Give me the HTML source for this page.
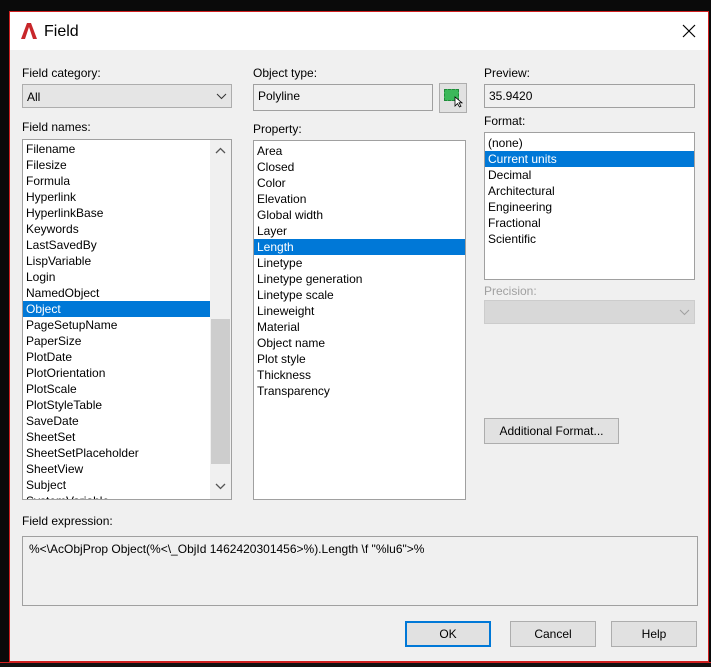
<!DOCTYPE html>
<html><head><meta charset="utf-8"><style>
*{box-sizing:border-box;margin:0;padding:0}
body{width:711px;height:667px;background:#0a0a0a;position:relative;overflow:hidden;font-family:"Liberation Sans",sans-serif;font-size:12px;color:#000}
.a{position:absolute}
.dlg{left:9px;top:11px;width:700px;height:651px;background:#f0f0f0;border:1px solid #d02020}
.title{left:9px;top:11px;width:700px;height:39px;background:#fff;border:1px solid #d02020;border-bottom:none}
.lbl{position:absolute;font-size:12px}
.box{position:absolute;border:1px solid #a0a0a0;background:#fff}
.item{height:16px;line-height:16px;padding-left:3px;white-space:nowrap}
.sel{background:#0078d7;color:#fff}
.btn{position:absolute;border:1px solid #adadad;background:#e1e1e1;text-align:center;line-height:24px}
</style></head><body>
<div class="a" style="left:0;top:662px;width:711px;height:5px;background:#111;border-top:1px solid #d02020"></div>
<div class="a dlg"></div>
<div class="a title"></div>
<svg class="a" style="left:20px;top:22px" width="18" height="18" viewBox="0 0 18 18"><path d="M1 17L7 1h4l6 16h-4L9 5 5 17z" fill="#c8262a"/></svg>
<div class="lbl" style="left:44px;top:23px;font-size:16px">Field</div>
<svg class="a" style="left:682px;top:24px" width="14" height="14"><path d="M1 1L13 13M13 1L1 13" stroke="#000" stroke-width="1.2"/></svg>

<div class="lbl" style="left:22px;top:66px">Field category:</div>
<div class="a" style="left:22px;top:84px;width:210px;height:24px;border:1px solid #adadad;background:#e5e5e5"><span style="position:absolute;left:4px;top:5px">All</span>
<svg style="position:absolute;right:4px;top:8px" width="11" height="7"><path d="M1 1l4.5 4.5L10 1" stroke="#333" fill="none"/></svg></div>

<div class="lbl" style="left:22px;top:120px">Field names:</div>
<div class="box" style="left:22px;top:139px;width:210px;height:361px;overflow:hidden">
<div style="padding-top:1px;width:187px">
<div class="item">Filename</div><div class="item">Filesize</div><div class="item">Formula</div><div class="item">Hyperlink</div><div class="item">HyperlinkBase</div><div class="item">Keywords</div><div class="item">LastSavedBy</div><div class="item">LispVariable</div><div class="item">Login</div><div class="item">NamedObject</div><div class="item sel">Object</div><div class="item">PageSetupName</div><div class="item">PaperSize</div><div class="item">PlotDate</div><div class="item">PlotOrientation</div><div class="item">PlotScale</div><div class="item">PlotStyleTable</div><div class="item">SaveDate</div><div class="item">SheetSet</div><div class="item">SheetSetPlaceholder</div><div class="item">SheetView</div><div class="item">Subject</div><div class="item">SystemVariable</div>
</div>
<div class="a" style="left:187px;top:0;width:21px;height:359px;background:#f0f0f0"></div>
<div class="a" style="left:188px;top:179px;width:19px;height:145px;background:#cdcdcd"></div>
<svg class="a" style="left:192px;top:7px" width="11" height="7"><path d="M1 6l4.5-4.5L10 6" stroke="#555" stroke-width="1.3" fill="none"/></svg>
<svg class="a" style="left:192px;top:343px" width="11" height="7"><path d="M1 1l4.5 4.5L10 1" stroke="#555" stroke-width="1.3" fill="none"/></svg>
</div>

<div class="lbl" style="left:253px;top:66px">Object type:</div>
<div class="a" style="left:253px;top:84px;width:180px;height:27px;border:1px solid #a0a0a0;background:#f0f0f0"><span style="position:absolute;left:4px;top:4px">Polyline</span></div>
<div class="a" style="left:439px;top:83px;width:28px;height:30px;border:1px solid #adadad;background:#e1e1e1"></div>
<div class="a" style="left:444px;top:89px;width:15px;height:12px;background:#3cb85a;border:1px dashed #1f8a3a"></div>
<svg class="a" style="left:454px;top:96px" width="9" height="12"><path d="M1 1v9l2.5-2.5 2 3.5 1.5-.8-2-3.4H8z" fill="#fff" stroke="#000" stroke-width=".8"/></svg>

<div class="lbl" style="left:253px;top:122px">Property:</div>
<div class="box" style="left:253px;top:140px;width:213px;height:360px">
<div style="padding-top:2px">
<div class="item">Area</div><div class="item">Closed</div><div class="item">Color</div><div class="item">Elevation</div><div class="item">Global width</div><div class="item">Layer</div><div class="item sel">Length</div><div class="item">Linetype</div><div class="item">Linetype generation</div><div class="item">Linetype scale</div><div class="item">Lineweight</div><div class="item">Material</div><div class="item">Object name</div><div class="item">Plot style</div><div class="item">Thickness</div><div class="item">Transparency</div>
</div></div>

<div class="lbl" style="left:484px;top:66px">Preview:</div>
<div class="a" style="left:484px;top:84px;width:211px;height:24px;border:1px solid #a0a0a0;background:#f0f0f0"><span style="position:absolute;left:4px;top:4px">35.9420</span></div>
<div class="lbl" style="left:484px;top:114px">Format:</div>
<div class="box" style="left:484px;top:132px;width:211px;height:148px">
<div style="padding-top:2px">
<div class="item">(none)</div><div class="item sel">Current units</div><div class="item">Decimal</div><div class="item">Architectural</div><div class="item">Engineering</div><div class="item">Fractional</div><div class="item">Scientific</div>
</div></div>
<div class="lbl" style="left:484px;top:284px;color:#a0a0a0">Precision:</div>
<div class="a" style="left:484px;top:300px;width:211px;height:24px;border:1px solid #ccc;background:#d8d8d8">
<svg style="position:absolute;right:4px;top:8px" width="11" height="7"><path d="M1 1l4.5 4.5L10 1" stroke="#a0a0a0" fill="none"/></svg></div>
<div class="btn" style="left:484px;top:418px;width:135px;height:26px">Additional Format...</div>

<div class="lbl" style="left:22px;top:514px">Field expression:</div>
<div class="a" style="left:22px;top:536px;width:676px;height:70px;border:1px solid #a0a0a0;background:#f0f0f0"><span style="position:absolute;left:6px;top:5px">%&lt;\AcObjProp Object(%&lt;\_ObjId 1462420301456&gt;%).Length \f "%lu6"&gt;%</span></div>

<div class="btn" style="left:405px;top:621px;width:86px;height:26px;border:2px solid #0078d7;line-height:22px">OK</div>
<div class="btn" style="left:510px;top:621px;width:86px;height:26px">Cancel</div>
<div class="btn" style="left:611px;top:621px;width:86px;height:26px">Help</div>
</body></html>
